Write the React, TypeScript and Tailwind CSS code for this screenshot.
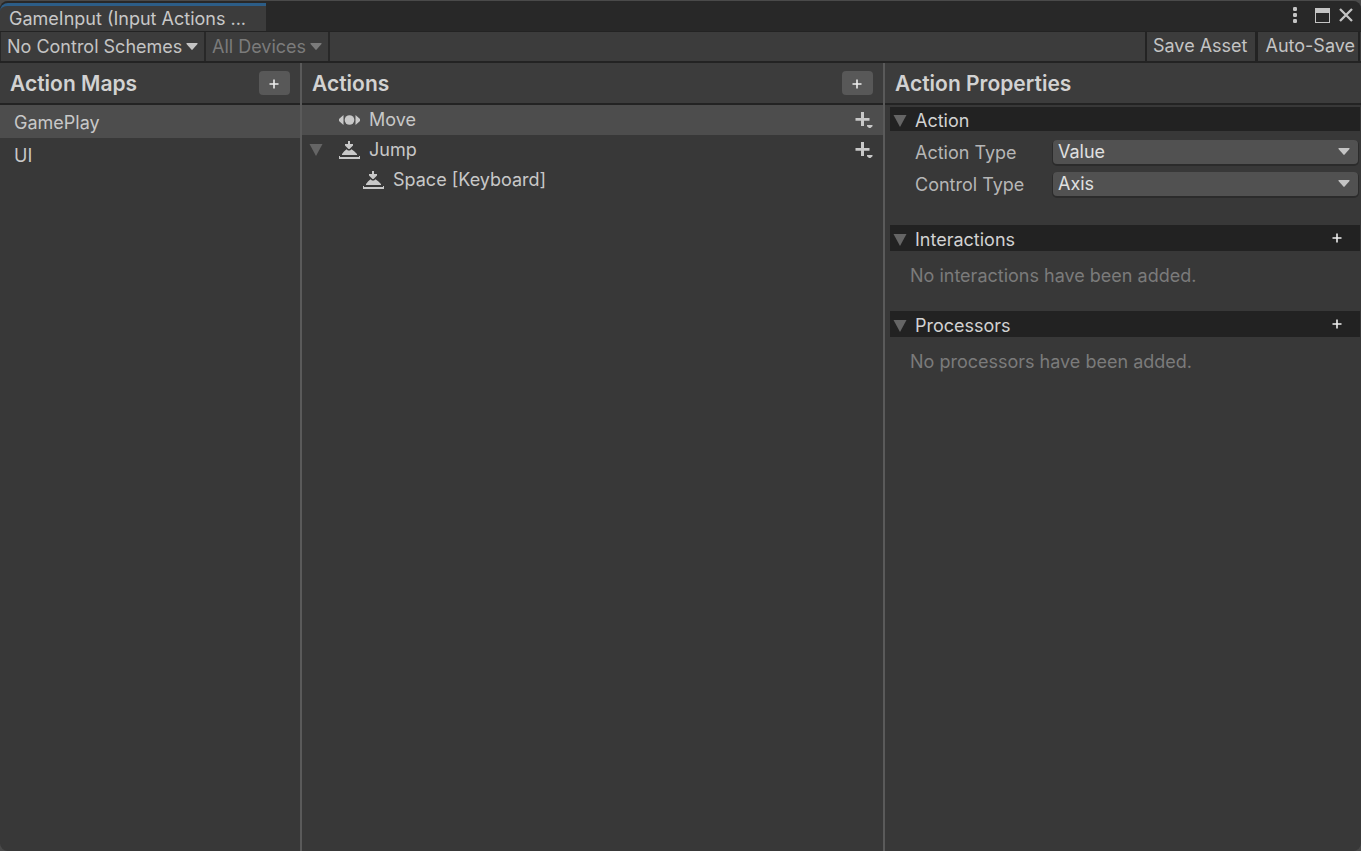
import { useState } from 'react'
import type { ReactNode } from 'react'
import clsx from 'clsx'

const actionMaps = ['GamePlay', 'UI']

interface PaneHeaderProps {
  title: string
  addLabel?: string
}

function CaretDown({ className }: { className?: string }) {
  return (
    <svg viewBox="0 0 12 7" className={clsx('h-[7px] w-3', className)} fill="currentColor" aria-hidden="true">
      <path d="M1 0h10q1 0 .5 1L6.6 6.6q-.6.6-1.2 0L.5 1Q0 0 1 0z" />
    </svg>
  )
}

function FoldoutArrow() {
  return (
    <svg viewBox="0 0 14 12" className="h-3 w-[14px] text-[#656565]" fill="currentColor" aria-hidden="true">
      <path d="M.5 0h13L7 12z" />
    </svg>
  )
}

function PlusIcon() {
  return (
    <svg viewBox="0 0 10 10" className="size-[10px]" stroke="currentColor" strokeWidth="1.6" aria-hidden="true">
      <path d="M5 .5v9M.5 5h9" />
    </svg>
  )
}

function AddBindingIcon() {
  return (
    <svg viewBox="0 0 18 18" className="size-[18px]" fill="currentColor" aria-hidden="true">
      <path d="M6 1h3v6h5.500v2.700H9V15H6V9.700H.5V7H6z" />
      <path d="M12 14h5.500v1.200l-2 1.800H14l-2-1.800z" />
    </svg>
  )
}

function ValueIcon() {
  return (
    <svg viewBox="0 0 21 12" className="h-3 w-[21px]" fill="currentColor" aria-hidden="true">
      <path d="M4.500 1v10L-.5 6.500v-1zM16.500 1v10l5-4.500v-1z" />
      <circle cx="10.500" cy="6" r="4.800" />
    </svg>
  )
}

function ButtonIcon() {
  return (
    <svg viewBox="0 0 21 18" className="h-[18px] w-[21px]" fill="currentColor" aria-hidden="true">
      <path d="M9 0h2v3h3v1.500L10.500 8h-1L6 4.500V3h3z" />
      <path d="M3 14v-1l2-2.500L7.500 8.300 9 9.400h2l1.500-1.100L15.500 10.500l2.500 2.500v1z" />
      <path d="M0 15h1v1h19v-1h1v3H0z" />
    </svg>
  )
}

function PaneHeader({ title, addLabel }: PaneHeaderProps) {
  return (
    <div className="flex h-[42px] items-center justify-between border-b-2 border-[#232323] bg-[#3c3c3c] px-[10px]">
      <h2 className="pt-px text-[21px] font-semibold text-[#d2d2d2]">{title}</h2>
      {addLabel && (
        <button
          type="button"
          aria-label={addLabel}
          className="flex h-6 w-[31px] items-center justify-center rounded bg-[#585858] pt-[2px] pr-px text-[#eeeeee]"
        >
          <PlusIcon />
        </button>
      )}
    </div>
  )
}

function ToolbarSelect({ label, value, disabled }: { label: string; value: string; disabled?: boolean }) {
  return (
    <div
      className={clsx(
        'relative flex border-r-2 border-[#282828]',
        disabled ? 'text-[#7b7b7b]' : 'text-[#c4c4c4]',
      )}
    >
      <select aria-label={label} disabled={disabled} className="appearance-none pr-[21px] pl-[6px] opacity-100">
        <option>{value}</option>
      </select>
      <CaretDown className="pointer-events-none absolute top-[11px] right-[6px]" />
    </div>
  )
}

interface ActionRowProps {
  name: string
  icon: ReactNode
  selected?: boolean
  expandable?: boolean
  child?: boolean
}

function ActionRow({ name, icon, selected, expandable, child }: ActionRowProps) {
  return (
    <li className={clsx('flex h-[30px] items-center pr-[10px]', selected && 'bg-[#4d4d4d]')}>
      <div className={clsx('flex shrink-0 items-center', child ? 'w-[61px]' : 'w-[37px]')}>
        {expandable && (
          <button type="button" aria-label={`Toggle ${name}`} className="ml-[7px]">
            <FoldoutArrow />
          </button>
        )}
      </div>
      <button type="button" className="flex flex-1 items-center gap-[9px] text-left">
        {icon}
        {name}
      </button>
      {!child && (
        <button type="button" aria-label={`Add binding to ${name}`}>
          <AddBindingIcon />
        </button>
      )}
    </li>
  )
}

function SectionHeader({ title, addLabel }: { title: string; addLabel?: string }) {
  return (
    <div className={clsx('flex items-center justify-between bg-[#222222]', addLabel ? 'h-[26px]' : 'h-6')}>
      <button type="button" className="flex items-center gap-2 pt-[3px] pl-[3px] text-[#d2d2d2]">
        <FoldoutArrow />
        {title}
      </button>
      {addLabel && (
        <button type="button" aria-label={addLabel} className="mr-[18px] text-[#eeeeee]">
          <PlusIcon />
        </button>
      )}
    </div>
  )
}

function PropertyField({ id, label, options }: { id: string; label: string; options: string[] }) {
  return (
    <div className="flex h-8 items-center pr-[2px] pl-[25px]">
      <label htmlFor={id} className="w-[138px] shrink-0 pt-px text-[#b6b6b6]">
        {label}
      </label>
      <div className="relative flex-1 text-[#e0e0e0]">
        <select
          id={id}
          className="block h-6 w-full appearance-none rounded bg-[#515151] pr-7 pl-[5px] text-lg leading-6 shadow-[0_1px_0_1px_#2b2b2b]"
        >
          {options.map((option) => (
            <option key={option}>{option}</option>
          ))}
        </select>
        <CaretDown className="pointer-events-none absolute top-2 right-2 text-[#c4c4c4]" />
      </div>
    </div>
  )
}

export default function App() {
  const [activeMap, setActiveMap] = useState('GamePlay')

  return (
    <div className="min-h-screen bg-[#4a4a4a] pt-px font-['Inter',sans-serif] text-lg leading-6 text-[#c8c8c8]">
      <main className="flex min-h-[calc(100vh-1px)] flex-col overflow-hidden rounded-lg bg-[#383838]">
        <header className="flex h-[31px] shrink-0 items-end justify-between border-b border-[#232323] bg-[#282828]">
          <h1 className="h-7 w-[266px] truncate rounded-tl-lg border-t-[3px] border-[#2c5d87] bg-[#3c3c3c] pt-px pr-3 pl-[9px] font-normal">
            GameInput (Input Actions ...
          </h1>
          <div className="flex h-7 items-center pr-2 pb-1 text-[#c4c4c4]">
            <button type="button" aria-label="Window menu" className="mr-[18px]">
              <svg viewBox="0 0 4 16" className="h-4 w-1" fill="currentColor" aria-hidden="true">
                <rect y="0" width="4" height="4" rx="1.300" />
                <rect y="6" width="4" height="4" rx="1.300" />
                <rect y="12" width="4" height="4" rx="1.300" />
              </svg>
            </button>
            <button type="button" aria-label="Maximize" className="mr-[9px]">
              <svg viewBox="0 0 15 15" className="size-[15px]" fill="currentColor" aria-hidden="true">
                <path fillRule="evenodd" d="M0 0h15v15H0zM1 5v9h13V5z" />
              </svg>
            </button>
            <button type="button" aria-label="Close">
              <svg viewBox="0 0 14 14" className="size-[14px]" stroke="currentColor" strokeWidth="2.300" aria-hidden="true">
                <path d="M1 1l12 12M13 1L1 13" />
              </svg>
            </button>
          </div>
        </header>

        <div className="flex h-[31px] shrink-0 items-stretch border-b-2 border-[#232323] bg-[#3c3c3c]">
          <div className="w-px bg-[#282828]" />
          <ToolbarSelect label="Control scheme" value="No Control Schemes" />
          <ToolbarSelect label="Devices" value="All Devices" disabled />
          <div className="ml-auto flex text-[#c4c4c4]">
            <button type="button" className="border-l-2 border-[#232323] pr-[7px] pb-[2px] pl-[6px]">
              Save Asset
            </button>
            <button
              type="button"
              aria-pressed="false"
              className="mr-px border-r-2 border-l-[3px] border-[#232323] pr-[3px] pb-[2px] pl-2"
            >
              Auto-Save
            </button>
          </div>
        </div>

        <div className="flex flex-1 items-stretch">
          <section className="w-[302px] shrink-0 border-r-2 border-[#5a5a5a]">
            <PaneHeader title="Action Maps" addLabel="Add action map" />
            <ul>
              {actionMaps.map((map) => (
                <li key={map}>
                  <button
                    type="button"
                    onClick={() => setActiveMap(map)}
                    className={clsx(
                      'block h-[33px] w-full px-[14px] pt-[2px] text-left',
                      activeMap === map && 'bg-[#4d4d4d]',
                    )}
                  >
                    {map}
                  </button>
                </li>
              ))}
            </ul>
          </section>

          <section className="min-w-0 flex-[581] border-r-2 border-[#5a5a5a]">
            <PaneHeader title="Actions" addLabel="Add action" />
            <ul>
              <ActionRow name="Move" icon={<ValueIcon />} selected />
              <ActionRow name="Jump" icon={<ButtonIcon />} expandable />
              <ActionRow name="Space [Keyboard]" icon={<ButtonIcon />} child />
            </ul>
          </section>

          <section className="min-w-0 flex-[476]">
            <PaneHeader title="Action Properties" />
            <div className="pt-[2px] pr-px pl-[5px]">
              <SectionHeader title="Action" />
              <div className="pt-[5px] pb-[25px]">
                <PropertyField id="action-type" label="Action Type" options={['Value', 'Button', 'Pass Through']} />
                <PropertyField id="control-type" label="Control Type" options={['Axis', 'Vector 2', 'Any']} />
              </div>
              <SectionHeader title="Interactions" addLabel="Add interaction" />
              <p className="pt-[13px] pb-[23px] pl-5 text-[#7b7b7b]">No interactions have been added.</p>
              <SectionHeader title="Processors" addLabel="Add processor" />
              <p className="pt-[13px] pb-[23px] pl-5 text-[#7b7b7b]">No processors have been added.</p>
            </div>
          </section>
        </div>
      </main>
    </div>
  )
}
